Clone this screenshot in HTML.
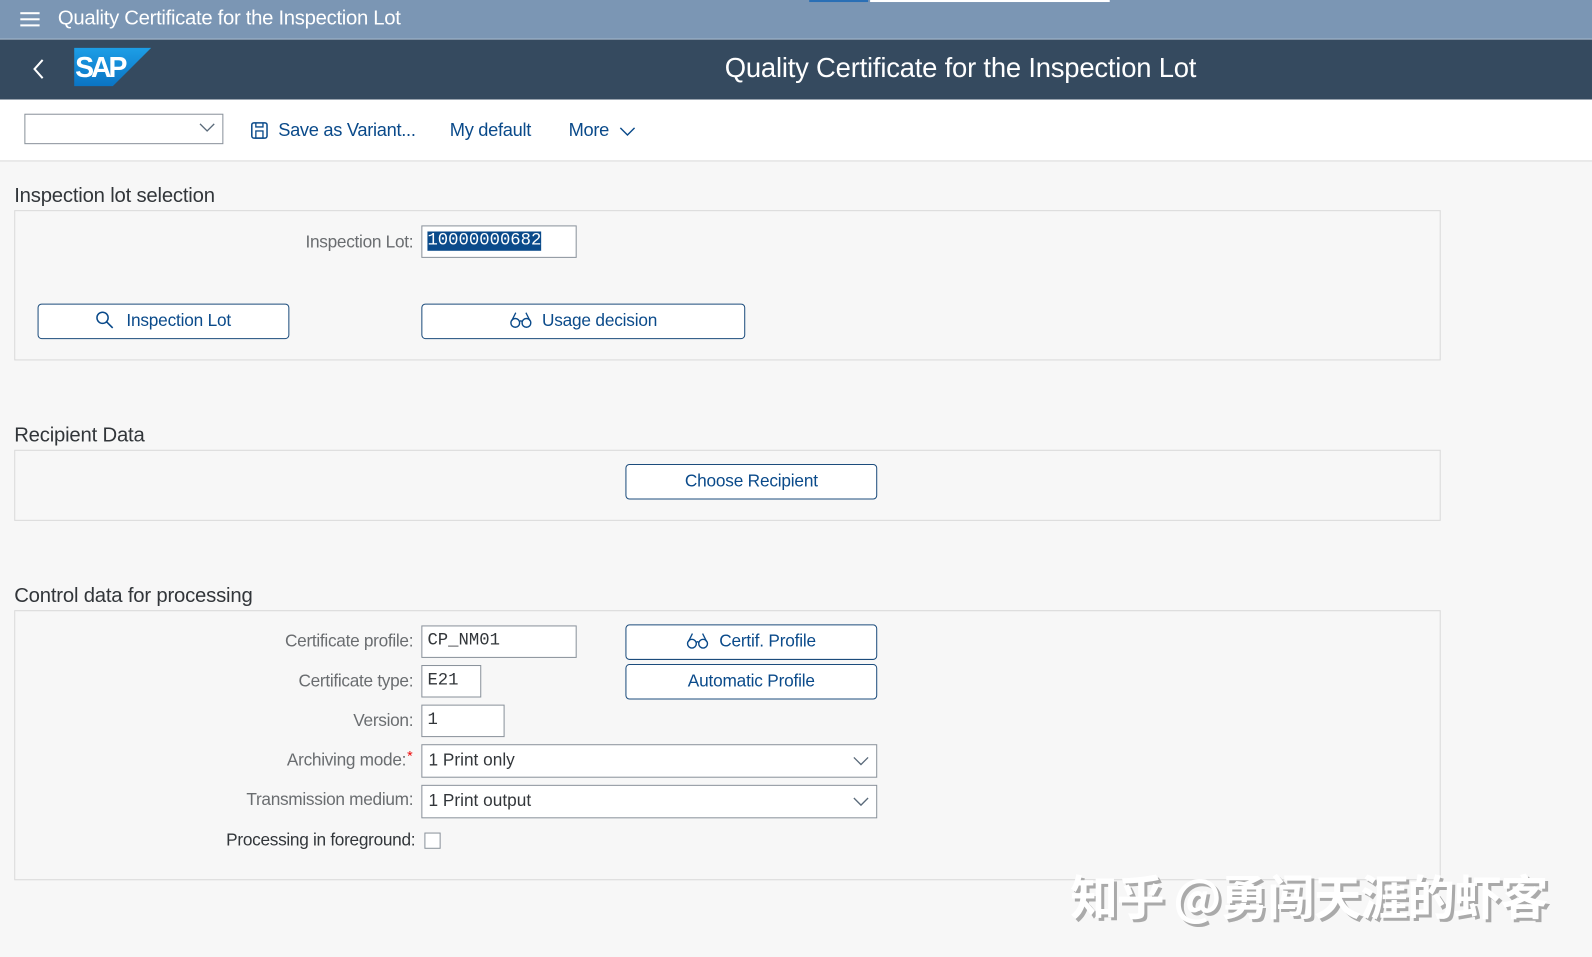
<!DOCTYPE html>
<html><head><meta charset="utf-8"><style>
html,body{margin:0;padding:0;width:1592px;height:957px;overflow:hidden;background:#f7f7f7;}
#w{position:absolute;left:0;top:0;width:1568px;height:943px;transform:scale(1.0153);transform-origin:0 0;font-family:"Liberation Sans",sans-serif;}
.a{position:absolute;}
.lbl{position:absolute;color:#6a6d70;font-size:17px;text-align:right;letter-spacing:-0.3px;}
.inp{position:absolute;background:#fff;border:1px solid #89919a;box-sizing:border-box;font-family:"Liberation Mono",monospace;font-size:17px;color:#32363a;padding:0 0 0 5px;line-height:30px;}
.btn{position:absolute;background:#fff;border:1px solid #1c4c7c;border-radius:4px;box-sizing:border-box;color:#0a4a8a;font-size:17px;text-align:center;line-height:32px;letter-spacing:-0.2px;}
.box{position:absolute;left:14px;width:1405px;border:1px solid #d9d9d9;box-sizing:border-box;}
.sec{position:absolute;left:14px;font-size:20px;color:#32363a;letter-spacing:-0.2px;}
.sel{position:absolute;background:#fff;border:1px solid #89919a;box-sizing:border-box;font-size:17px;color:#32363a;padding-left:6px;line-height:30px;}
.gl{vertical-align:-3px;margin-right:10px}
</style></head><body><div id="w">
<div class="a" style="left:0;top:0;width:1568px;height:38px;background:#7b96b4;border-bottom:1px solid #a9bbcf"></div>
<div class="a" style="left:797px;top:0;width:58px;height:2px;background:#2a6fb5"></div>
<div class="a" style="left:857px;top:0;width:236px;height:2px;background:#fff"></div>
<div class="a" style="left:20px;top:12px;width:19px;height:2px;background:#fff;box-shadow:0 6px 0 #fff,0 12px 0 #fff"></div>
<div class="a" style="left:57px;top:7px;color:#fff;font-size:20px;letter-spacing:-0.3px">Quality Certificate for the Inspection Lot</div>
<div class="a" style="left:0;top:39px;width:1568px;height:59px;background:#354a5f"></div>
<svg class="a" style="left:30px;top:57px" width="16" height="22"><path d="M12 2 L4 11 L12 20" stroke="#fff" stroke-width="2" fill="none"/></svg>
<svg class="a" style="left:73px;top:47px" width="76" height="38"><defs><linearGradient id="g" x1="0" y1="0" x2="0" y2="1"><stop offset="0" stop-color="#1d9ee6"/><stop offset="1" stop-color="#0a74c4"/></linearGradient></defs><path d="M0 0H76L38 38H0Z" fill="url(#g)"/><text x="1" y="29" font-family="Liberation Sans" font-weight="bold" font-size="28" fill="#fff" letter-spacing="-3">SAP</text></svg>
<div class="a" style="left:600px;width:692px;top:52px;text-align:center;color:#fff;font-size:27px;letter-spacing:-0.2px">Quality Certificate for the Inspection Lot</div>
<div class="a" style="left:0;top:98px;width:1568px;height:60px;background:#fff;border-bottom:1px solid #d9d9d9"></div>
<div class="a" style="left:24px;top:112px;width:196px;height:30px;border:1px solid #89919a;box-sizing:border-box;background:#fff"></div>
<svg class="a" style="left:196px;top:121px" width="16" height="10"><path d="M1 1L8 8L15 1" stroke="#5a6a7a" stroke-width="1.3" fill="none"/></svg>
<svg class="a" style="left:247px;top:120px" width="18" height="18"><rect x="1" y="1" width="15" height="15" rx="2" stroke="#0a4a8a" stroke-width="1.5" fill="none"/><rect x="5" y="9" width="7" height="7" stroke="#0a4a8a" stroke-width="1.3" fill="none"/><path d="M5 1v4h7V1" stroke="#0a4a8a" stroke-width="1.3" fill="none"/></svg>
<div class="a" style="left:274px;top:118px;color:#0a4a8a;font-size:18px;letter-spacing:-0.3px">Save as Variant...</div>
<div class="a" style="left:443px;top:118px;color:#0a4a8a;font-size:18px;letter-spacing:-0.3px">My default</div>
<div class="a" style="left:560px;top:118px;color:#0a4a8a;font-size:18px;letter-spacing:-0.3px">More</div>
<svg class="a" style="left:610px;top:125px" width="16" height="10"><path d="M1 1L8 8L15 1" stroke="#0a4a8a" stroke-width="1.4" fill="none"/></svg>

<div class="sec" style="top:182px">Inspection lot selection</div>
<div class="box" style="top:207px;height:148px"></div>
<div class="lbl" style="left:200px;width:207px;top:229px">Inspection Lot:</div>
<div class="inp" style="left:415px;top:222px;width:153px;height:32px"><span style="background:#0a4a8a;color:#fff">10000000682</span></div>
<div class="btn" style="left:37px;top:299px;width:248px;height:35px"><svg style="vertical-align:-3px;margin-right:12px" width="18" height="18"><circle cx="7" cy="7" r="5.5" stroke="#0a4a8a" stroke-width="1.5" fill="none"/><path d="M11 11L17 17" stroke="#0a4a8a" stroke-width="1.6"/></svg>Inspection Lot</div>
<div class="btn" style="left:415px;top:299px;width:319px;height:35px"><svg class="gl" width="22" height="18"><circle cx="5.5" cy="12" r="4.3" stroke="#0a4a8a" stroke-width="1.4" fill="none"/><circle cx="16.5" cy="12" r="4.3" stroke="#0a4a8a" stroke-width="1.4" fill="none"/><path d="M2 10 L6 2 M20 10 L16 2 M9.5 11 Q11 9 12.5 11" stroke="#0a4a8a" stroke-width="1.3" fill="none"/></svg>Usage decision</div>

<div class="sec" style="top:418px">Recipient Data</div>
<div class="box" style="top:443px;height:70px"></div>
<div class="btn" style="left:616px;top:457px;width:248px;height:35px">Choose Recipient</div>

<div class="sec" style="top:576px">Control data for processing</div>
<div class="box" style="top:601px;height:266px"></div>
<div class="lbl" style="left:200px;width:207px;top:622px">Certificate profile:</div>
<div class="inp" style="left:415px;top:616px;width:153px;height:32px">CP_NM01</div>
<div class="lbl" style="left:200px;width:207px;top:661px">Certificate type:</div>
<div class="inp" style="left:415px;top:655px;width:59px;height:32px">E21</div>
<div class="lbl" style="left:200px;width:207px;top:700px">Version:</div>
<div class="inp" style="left:415px;top:694px;width:82px;height:32px">1</div>
<div class="lbl" style="left:200px;width:200px;top:739px">Archiving mode:</div>
<div class="a" style="left:401px;top:736px;color:#e00;font-size:14px">*</div>
<div class="sel" style="left:415px;top:733px;width:449px;height:33px">1 Print only</div>
<div class="lbl" style="left:200px;width:207px;top:778px">Transmission medium:</div>
<div class="sel" style="left:415px;top:773px;width:449px;height:33px">1 Print output</div>
<svg class="a" style="left:840px;top:745px" width="16" height="10"><path d="M1 1L8 8L15 1" stroke="#5a6a7a" stroke-width="1.3" fill="none"/></svg>
<svg class="a" style="left:840px;top:785px" width="16" height="10"><path d="M1 1L8 8L15 1" stroke="#5a6a7a" stroke-width="1.3" fill="none"/></svg>
<div class="lbl" style="left:130px;width:279px;top:818px;color:#32363a">Processing in foreground:</div>
<div class="a" style="left:418px;top:820px;width:16px;height:16px;border:1px solid #89919a;box-sizing:border-box;background:#fff"></div>
<div class="btn" style="left:616px;top:615px;width:248px;height:35px"><svg class="gl" width="22" height="18"><circle cx="5.5" cy="12" r="4.3" stroke="#0a4a8a" stroke-width="1.4" fill="none"/><circle cx="16.5" cy="12" r="4.3" stroke="#0a4a8a" stroke-width="1.4" fill="none"/><path d="M2 10 L6 2 M20 10 L16 2 M9.5 11 Q11 9 12.5 11" stroke="#0a4a8a" stroke-width="1.3" fill="none"/></svg>Certif. Profile</div>
<div class="btn" style="left:616px;top:654px;width:248px;height:35px">Automatic Profile</div>

<div class="a" style="left:1054px;top:846px;font-family:'Noto Sans CJK SC',sans-serif;font-size:47px;font-weight:bold;color:#fff;text-shadow:3px 3px 0 #aaa;letter-spacing:-1px;white-space:nowrap">知乎 @勇闯天涯的虾客</div>
</div></body></html>
